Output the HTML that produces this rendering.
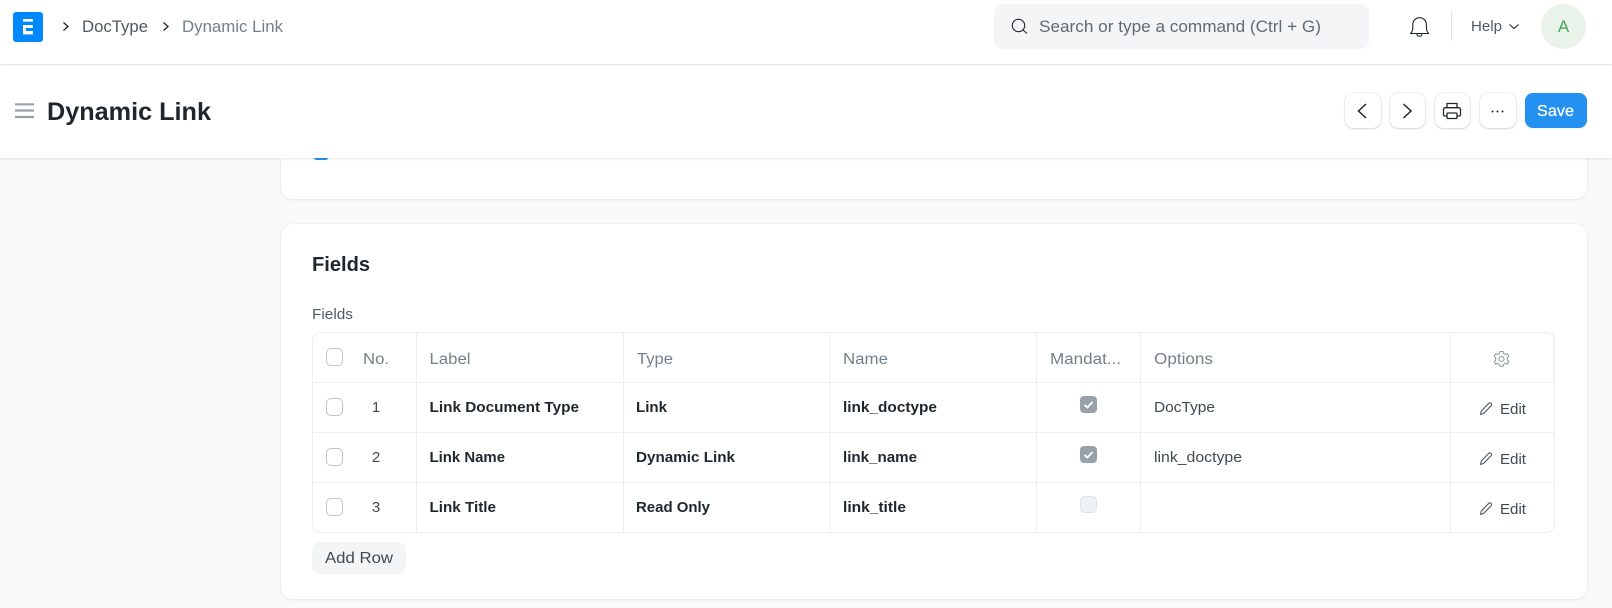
<!DOCTYPE html>
<html lang="en"><head><meta charset="utf-8"><title>Dynamic Link</title>
<style>
html,body{margin:0;padding:0;width:1612px;height:608px;overflow:hidden;background:#f8f9f9;font-family:"Liberation Sans",sans-serif}
.a{position:absolute;box-sizing:border-box}
.card{background:#fff;border-radius:12px;left:281px;width:1306px;box-shadow:0 0 1px rgba(0,0,0,.14),0 1px 3px rgba(0,0,0,.06)}
.btn{top:93px;width:35.500px;height:35px;background:#fff;border-radius:8px;box-shadow:0 0 1px rgba(0,0,0,.3),0 1px 2px rgba(0,0,0,.12)}
svg{position:absolute;left:0;top:0}
text{font-family:"Liberation Sans",sans-serif}
.b{font-weight:700;fill:#1f272e;font-size:15px}
.r{fill:#3f4a53;font-size:15px}
.h{fill:#74808b;font-size:15.500px}
</style></head><body>
<div class="a card" style="top:120px;height:79px"></div>
<div class="a" style="left:313px;top:148px;width:16px;height:12px;background:#2490ef;border-radius:4px"></div>
<div class="a card" style="top:224px;height:375px"></div>
<div class="a" style="left:0;top:65px;width:1612px;height:93px;background:#fff;box-shadow:0 1px 3px rgba(0,0,0,.1)"></div>
<div class="a" style="left:0;top:0;width:1612px;height:64px;background:#fff;box-shadow:0 1px 2px rgba(0,0,0,.09)"></div>
<div class="a" style="left:994px;top:4px;width:375px;height:45px;background:#f4f5f6;border-radius:8px"></div>
<div class="a" style="left:1541px;top:4px;width:45px;height:45px;background:#e9f3ea;border-radius:50%"></div>
<div class="a btn" style="left:1345px"></div>
<div class="a btn" style="left:1389.500px"></div>
<div class="a btn" style="left:1434.500px"></div>
<div class="a btn" style="left:1480px"></div>
<div class="a" style="left:1525px;top:93px;width:62px;height:35px;background:#2490ef;border-radius:8px;box-shadow:0 0 1px rgba(0,0,0,.25)"></div>
<div class="a" style="left:312px;top:332px;width:1243px;height:200.500px;border:1px solid #ebeff2;border-radius:9px"></div>
<div class="a" style="left:312px;top:542px;width:94px;height:32px;background:#f4f5f6;border-radius:8px"></div>

<svg width="1612" height="608" viewBox="0 0 1612 608" xmlns="http://www.w3.org/2000/svg">
<!-- logo -->
<rect x="13" y="12" width="30" height="30" rx="3" fill="#0089ff"/>
<path d="M23 19h10v2.600H23zM23 25h10v3H26v3h7v3.400H23z" fill="#fff"/>
<!-- breadcrumbs -->
<path d="M63.500 22.500l4.500 4-4.500 4M163.500 22.500l4.500 4-4.500 4" fill="none" stroke="#1f272e" stroke-width="1.300"/>
<text x="82" y="32" font-size="16.500" fill="#505a62" textLength="66" lengthAdjust="spacingAndGlyphs">DocType</text>
<text x="182" y="32" font-size="16.500" fill="#74808b" textLength="101" lengthAdjust="spacingAndGlyphs">Dynamic Link</text>
<!-- search -->
<circle cx="1018.500" cy="25.500" r="6.200" fill="none" stroke="#1f272e" stroke-width="1.100"/>
<path d="M1023 30l4 3.500" stroke="#1f272e" stroke-width="1.100" fill="none"/>
<text x="1039" y="32" font-size="16.500" fill="#5f6b75" textLength="282" lengthAdjust="spacingAndGlyphs">Search or type a command (Ctrl + G)</text>
<!-- bell -->
<path d="M1410.500 33.500c1.700-1.500 2.300-3 2.300-6v-3a6.800 6.800 0 0 1 13.600 0v3c0 3 .6 4.500 2.300 6z" fill="none" stroke="#1f272e" stroke-width="1.100" stroke-linejoin="round"/>
<path d="M1417 34c.2 3 4.800 3 5 0" fill="none" stroke="#1f272e" stroke-width="1.100"/>
<rect x="1451" y="11" width="1" height="30" fill="#e2e6e9"/>
<text x="1471" y="31" font-size="15" fill="#505a62" textLength="31" lengthAdjust="spacingAndGlyphs">Help</text>
<path d="M1509.500 24.500l4.500 4 4.500-4" fill="none" stroke="#1f272e" stroke-width="1.100"/>
<text x="1563.500" y="32" font-size="17" fill="#48a15a" text-anchor="middle">A</text>
<!-- page head -->
<path d="M15 104.300h19M15 110.500h19M15 117h19" stroke="#98a1a9" stroke-width="2.200"/>
<text x="47" y="120" font-size="25" font-weight="700" fill="#1f272e" textLength="164" lengthAdjust="spacingAndGlyphs">Dynamic Link</text>
<path d="M1366 104l-7.500 7 7.500 7" fill="none" stroke="#1f272e" stroke-width="1.500"/>
<path d="M1403.500 104l7.500 7-7.500 7" fill="none" stroke="#1f272e" stroke-width="1.500"/>
<path d="M1447 108v-4.500h10v4.500M1447 116h-2a1.500 1.500 0 0 1-1.500-1.500v-5a1.800 1.800 0 0 1 1.800-1.800h13.400a1.800 1.800 0 0 1 1.800 1.800v5a1.500 1.500 0 0 1-1.500 1.500h-2" fill="none" stroke="#1f272e" stroke-width="1.300"/>
<rect x="1447" y="113" width="10" height="5.500" rx="1" fill="none" stroke="#1f272e" stroke-width="1.300"/>
<circle cx="1492.500" cy="111.500" r="1" fill="#1f272e"/><circle cx="1497.500" cy="111.500" r="1" fill="#1f272e"/><circle cx="1502.500" cy="111.500" r="1" fill="#1f272e"/>
<text x="1537" y="116" font-size="16" fill="#fff" textLength="37" lengthAdjust="spacingAndGlyphs" stroke="#fff" stroke-width=".2">Save</text>
<!-- card -->
<text x="312" y="271" font-size="20" font-weight="700" fill="#1f272e" textLength="58" lengthAdjust="spacingAndGlyphs">Fields</text>
<text x="312" y="319" font-size="14.500" fill="#505a62" textLength="41" lengthAdjust="spacingAndGlyphs">Fields</text>
<!-- table lines -->
<g fill="#ebeff2">
<rect x="312" y="382" width="1243" height="1"/><rect x="312" y="432" width="1243" height="1"/><rect x="312" y="482" width="1243" height="1"/>
<rect x="416" y="332" width="1" height="200"/><rect x="623" y="332" width="1" height="200"/><rect x="829.500" y="332" width="1" height="200"/>
<rect x="1036" y="332" width="1" height="200"/><rect x="1140" y="332" width="1" height="200"/><rect x="1450" y="332" width="1" height="200"/><rect x="1553" y="332" width="1" height="50"/>
</g>
<!-- checkboxes -->
<g fill="#fff" stroke="#c0c6cc" stroke-width="1">
<rect x="326.500" y="348.500" width="16" height="17" rx="4.500"/>
<rect x="326.500" y="398.500" width="16" height="17" rx="4.500"/>
<rect x="326.500" y="448.500" width="16" height="17" rx="4.500"/>
<rect x="326.500" y="498.500" width="16" height="17" rx="4.500"/>
</g>
<rect x="1080" y="396" width="17" height="17" rx="4" fill="#98a1a9"/>
<path d="M1084.500 405l3 2.500 5-5.500" fill="none" stroke="#fff" stroke-width="1.800"/>
<rect x="1080" y="446" width="17" height="17" rx="4" fill="#98a1a9"/>
<path d="M1084.500 455l3 2.500 5-5.500" fill="none" stroke="#fff" stroke-width="1.800"/>
<rect x="1080.500" y="496.500" width="16" height="16" rx="4" fill="#f0f1f2" stroke="#dfe3e6"/>
<!-- header -->
<text x="363" y="364" class="h" textLength="26" lengthAdjust="spacingAndGlyphs">No.</text>
<text x="429.500" y="364" class="h" textLength="41" lengthAdjust="spacingAndGlyphs">Label</text>
<text x="637" y="364" class="h" textLength="36" lengthAdjust="spacingAndGlyphs">Type</text>
<text x="843" y="364" class="h" textLength="45" lengthAdjust="spacingAndGlyphs">Name</text>
<text x="1050" y="364" class="h" textLength="71" lengthAdjust="spacingAndGlyphs">Mandat...</text>
<text x="1154" y="364" class="h" textLength="59" lengthAdjust="spacingAndGlyphs">Options</text>
<g transform="translate(1501.500,359)" fill="none" stroke="#8a949c" stroke-width="1">
<circle r="2.500"/>
<path d="M-1.500-7.500h3l.6 2 1.700.9 2-.7 1.500 2.600-1.500 1.500v2.200l1.500 1.500-1.500 2.600-2-.7-1.700.9-.6 2h-3l-.6-2-1.700-.9-2 .7-1.500-2.600 1.500-1.500v-2.200l-1.500-1.500 1.500-2.600 2 .7 1.700-.9z" stroke-linejoin="round"/>
</g>
<!-- rows -->
<text x="376" y="412" class="r" text-anchor="middle">1</text>
<text x="376" y="462" class="r" text-anchor="middle">2</text>
<text x="376" y="512" class="r" text-anchor="middle">3</text>
<text x="429.500" y="412" class="b" textLength="149.500" lengthAdjust="spacingAndGlyphs">Link Document Type</text>
<text x="429.500" y="462" class="b" textLength="75.500" lengthAdjust="spacingAndGlyphs">Link Name</text>
<text x="429.500" y="512" class="b" textLength="66.500" lengthAdjust="spacingAndGlyphs">Link Title</text>
<text x="636" y="412" class="b" textLength="31" lengthAdjust="spacingAndGlyphs">Link</text>
<text x="636" y="462" class="b" textLength="99" lengthAdjust="spacingAndGlyphs">Dynamic Link</text>
<text x="636" y="512" class="b" textLength="74" lengthAdjust="spacingAndGlyphs">Read Only</text>
<text x="843" y="412" class="b" textLength="94" lengthAdjust="spacingAndGlyphs">link_doctype</text>
<text x="843" y="462" class="b" textLength="74" lengthAdjust="spacingAndGlyphs">link_name</text>
<text x="843" y="512" class="b" textLength="63" lengthAdjust="spacingAndGlyphs">link_title</text>
<text x="1154" y="412" class="r" textLength="61" lengthAdjust="spacingAndGlyphs">DocType</text>
<text x="1154" y="462" class="r" textLength="88" lengthAdjust="spacingAndGlyphs">link_doctype</text>
<!-- edit -->
<g fill="none" stroke="#505a62" stroke-width="1.100" stroke-linejoin="round">
<path d="M1480.500 414.500l.8-3.500 7.500-7.800a1.400 1.400 0 0 1 2 0l.4.400a1.400 1.400 0 0 1 0 2l-7.500 7.800z"/>
<path d="M1480.500 464.500l.8-3.500 7.500-7.800a1.400 1.400 0 0 1 2 0l.4.400a1.400 1.400 0 0 1 0 2l-7.500 7.800z"/>
<path d="M1480.500 514.500l.8-3.500 7.500-7.800a1.400 1.400 0 0 1 2 0l.4.400a1.400 1.400 0 0 1 0 2l-7.500 7.800z"/>
</g>
<text x="1500" y="414" class="r" textLength="26" lengthAdjust="spacingAndGlyphs">Edit</text>
<text x="1500" y="464" class="r" textLength="26" lengthAdjust="spacingAndGlyphs">Edit</text>
<text x="1500" y="514" class="r" textLength="26" lengthAdjust="spacingAndGlyphs">Edit</text>
<text x="325" y="563" font-size="15.500" fill="#3f4a53" textLength="68" lengthAdjust="spacingAndGlyphs">Add Row</text>
</svg>
</body></html>
